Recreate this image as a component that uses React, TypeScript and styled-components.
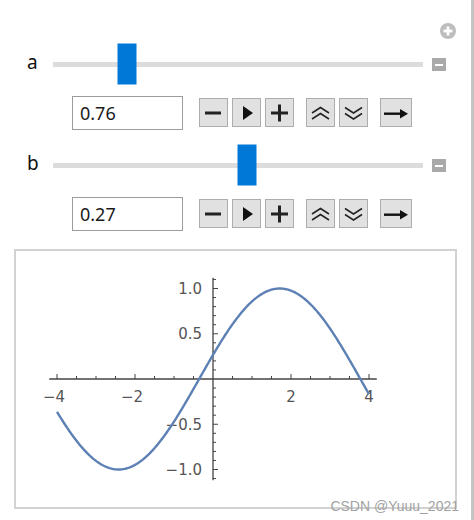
import React from "react";
import styled, { createGlobalStyle } from "styled-components";

const Global = createGlobalStyle`
  html, body { margin: 0; padding: 0; background: #fff; }
  body { font-family: "Noto Sans", "Open Sans", sans-serif; }
  * { box-sizing: border-box; }
`;

const Panel = styled.div`
  position: relative;
  width: 474px;
  height: 520px;
  background: #fff;
  border-right: 3px solid #c4c4c4;
  padding-top: 23px;
  display: flex;
  flex-direction: column;
`;

const TopBar = styled.div`
  display: flex;
  justify-content: flex-end;
  height: 16px;
  padding-right: 15px;
  margin-bottom: 4px;
`;

const Section = styled.div<{ $gap: number }>`
  display: flex;
  flex-direction: column;
  margin-bottom: ${(p) => p.$gap}px;
`;

const SliderRow = styled.div`
  display: flex;
  align-items: center;
  height: 41px;
`;

const Label = styled.div`
  width: 53px;
  padding-left: 27px;
  font-size: 19px;
  line-height: 1;
  color: #111;
  padding-bottom: 2px;
`;

const Track = styled.div`
  position: relative;
  width: 370px;
  height: 5px;
  background: #dcdcdc;
  margin-top: 2px;
`;

const Thumb = styled.div`
  position: absolute;
  top: 50%;
  width: 19px;
  height: 41px;
  background: #0078d7;
  transform: translate(-50%, -50%);
  margin-top: -1px;
`;

const MinusBox = styled.div`
  margin-left: 9px;
  width: 14px;
  height: 13px;
  background: #a9a9a9;
  display: flex;
  align-items: center;
  justify-content: center;
  margin-top: 2px;
  &::after {
    content: "";
    width: 8px;
    height: 2px;
    background: #fff;
  }
`;

const ControlRow = styled.div`
  display: flex;
  align-items: center;
  height: 34px;
  margin-top: 12px;
  padding-left: 72px;
`;

const ValueBox = styled.div`
  width: 111px;
  height: 34px;
  border: 1px solid #9c9c9c;
  background: #fff;
  padding-left: 7px;
  display: flex;
  align-items: center;
  font-size: 18px;
  color: #1a1a1a;
  margin-right: 16px;
`;

const Group = styled.div<{ $after: number }>`
  display: flex;
  gap: 4px;
  margin-right: ${(p) => p.$after}px;
  margin-top: -2px;
`;

const Btn = styled.div<{ $w?: number }>`
  width: ${(p) => p.$w ?? 29}px;
  height: 29px;
  background: #e1e1e1;
  border: 1px solid #adadad;
  display: flex;
  align-items: center;
  justify-content: center;
  svg { display: block; }
`;

const PlotFrame = styled.div`
  margin-left: 14px;
  width: 443px;
  height: 260px;
  border: 2px solid #d2d2d2;
  background: #fff;
  svg { display: block; }
`;

const Watermark = styled.div`
  position: absolute;
  right: 12px;
  bottom: 6px;
  font-family: "Liberation Sans", Arial, sans-serif;
  font-size: 14px;
  line-height: 16px;
  color: #a2a2a2;
`;

const PlusCircle = () => (
  <svg width="16" height="16" viewBox="0 0 16 16">
    <circle cx="8" cy="8" r="8" fill="#bdbdbd" />
    <rect x="3.5" y="6.6" width="9" height="2.8" fill="#fff" />
    <rect x="6.6" y="3.5" width="2.8" height="9" fill="#fff" />
  </svg>
);

const IconMinus = () => (
  <svg width="27" height="27" viewBox="0 0 27 27">
    <rect x="5" y="12.5" width="16" height="3" fill="#222" />
  </svg>
);
const IconPlay = () => (
  <svg width="27" height="27" viewBox="0 0 27 27">
    <polygon points="10,7 20,14 10,21" fill="#111" />
  </svg>
);
const IconPlus = () => (
  <svg width="27" height="27" viewBox="0 0 27 27">
    <rect x="5" y="12.5" width="17" height="3" fill="#222" />
    <rect x="12" y="5.5" width="3" height="17" fill="#222" />
  </svg>
);
const IconFaster = () => (
  <svg width="27" height="27" viewBox="0 0 27 27">
    <polyline points="5,14 13.5,8.5 22,14" fill="none" stroke="#222" strokeWidth="1.5" />
    <polyline points="5,20 13.5,14.5 22,20" fill="none" stroke="#222" strokeWidth="1.5" />
  </svg>
);
const IconSlower = () => (
  <svg width="27" height="27" viewBox="0 0 27 27">
    <polyline points="5,8.5 13.5,14 22,8.5" fill="none" stroke="#222" strokeWidth="1.5" />
    <polyline points="5,14.5 13.5,20 22,14.5" fill="none" stroke="#222" strokeWidth="1.5" />
  </svg>
);
const IconArrow = () => (
  <svg width="30" height="27" viewBox="0 0 30 27">
    <rect x="3" y="13.5" width="18" height="2.4" fill="#111" />
    <polygon points="19,10 27,14.7 19,19.4" fill="#111" />
  </svg>
);

type Param = { name: string; value: string; pos: number };
const params: Param[] = [
  { name: "a", value: "0.76", pos: 0.199 },
  { name: "b", value: "0.27", pos: 0.524 },
];

const Controls: React.FC<{ p: Param; gap: number }> = ({ p, gap }) => (
  <Section $gap={gap}>
    <SliderRow>
      <Label>{p.name}</Label>
      <Track>
        <Thumb style={{ left: `${p.pos * 100}%` }} />
      </Track>
      <MinusBox />
    </SliderRow>
    <ControlRow>
      <ValueBox>{p.value}</ValueBox>
      <Group $after={12}>
        <Btn><IconMinus /></Btn>
        <Btn><IconPlay /></Btn>
        <Btn><IconPlus /></Btn>
      </Group>
      <Group $after={12}>
        <Btn><IconFaster /></Btn>
        <Btn><IconSlower /></Btn>
      </Group>
      <Group $after={0}>
        <Btn $w={32}><IconArrow /></Btn>
      </Group>
    </ControlRow>
  </Section>
);

const W = 439;
const H = 256;
const X0 = 197;
const Y0 = 128;
const SX = 39;
const SY = 90.5;
const X = (u: number) => X0 + u * SX;
const Y = (v: number) => Y0 - v * SY;

const Plot: React.FC = () => {
  const a = 0.76;
  const b = 0.27;
  const pts: string[] = [];
  for (let i = 0; i <= 320; i++) {
    const u = -4 + (8 * i) / 320;
    pts.push(`${X(u).toFixed(2)},${Y(Math.sin(a * u + b)).toFixed(2)}`);
  }
  const xTicks: JSX.Element[] = [];
  for (let k = -8; k <= 8; k++) {
    if (k === 0) continue;
    const u = k * 0.5;
    const major = k % 4 === 0;
    xTicks.push(
      <line key={`x${k}`} x1={X(u)} x2={X(u)} y1={Y0} y2={Y0 - (major ? 5 : 3)} stroke="#444" strokeWidth="1" />
    );
  }
  const yTicks: JSX.Element[] = [];
  for (let k = -11; k <= 11; k++) {
    if (k === 0) continue;
    const v = k * 0.1;
    const major = k % 5 === 0;
    yTicks.push(
      <line key={`y${k}`} x1={X0} x2={X0 + (major ? 5 : 3)} y1={Y(v)} y2={Y(v)} stroke="#444" strokeWidth="1" />
    );
  }
  const labelStyle = {
    fontFamily: '"DejaVu Sans", sans-serif',
    fontSize: 15,
    fill: "#555",
  } as const;
  return (
    <svg width={W} height={H} viewBox={`0 0 ${W} ${H}`}>
      <line x1={X(-4.2)} x2={X(4.2)} y1={Y0} y2={Y0} stroke="#444" strokeWidth="1.3" />
      <line x1={X0} x2={X0} y1={Y(1.12)} y2={Y(-1.12)} stroke="#444" strokeWidth="1.3" />
      {xTicks}
      {yTicks}
      {[-4, -2, 2, 4].map((u) => (
        <text key={u} x={X(u) - (u < 0 ? 3 : 0)} y={Y0 + 23} textAnchor="middle" {...labelStyle}>
          {u < 0 ? `\u2212${-u}` : `${u}`}
        </text>
      ))}
      {[1, 0.5, -0.5, -1].map((v) => (
        <text key={v} x={X0 - 11} y={Y(v) + 5.5} textAnchor="end" {...labelStyle}>
          {v < 0 ? `\u2212${(-v).toFixed(1)}` : v.toFixed(1)}
        </text>
      ))}
      <polyline points={pts.join(" ")} fill="none" stroke="#5e81b5" strokeWidth="2.4" strokeLinejoin="round" />
    </svg>
  );
};

export default function App() {
  return (
    <>
      <Global />
      <Panel>
        <TopBar>
          <PlusCircle />
        </TopBar>
        <Controls p={params[0]} gap={14} />
        <Controls p={params[1]} gap={18} />
        <PlotFrame>
          <Plot />
        </PlotFrame>
        <Watermark>CSDN @Yuuu_2021</Watermark>
      </Panel>
    </>
  );
}
